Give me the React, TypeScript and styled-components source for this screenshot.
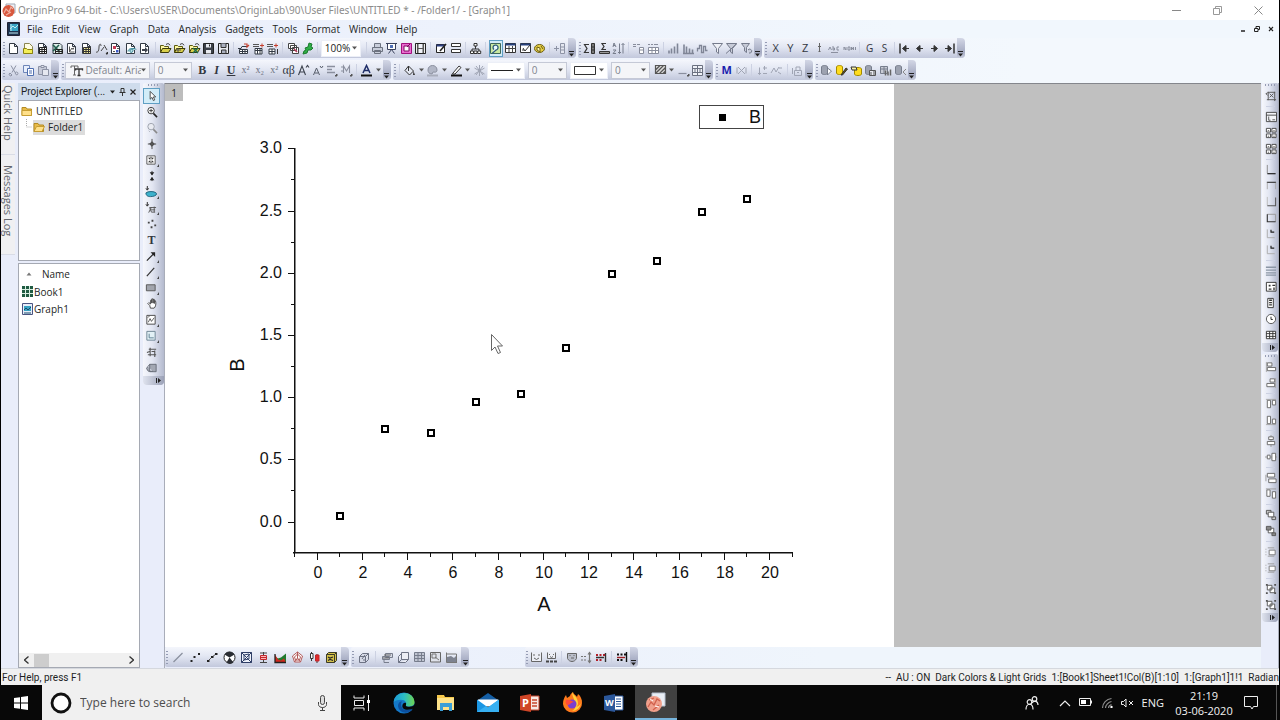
import React from 'react';
import styled, { createGlobalStyle, css } from 'styled-components';

/* ---------- icon drawings, on a 13 x 13 grid: [path, stroke, fill, stroke width] ---------- */

type Stroke = [string, string?, string?, number?];

const INK = '#333a45';
const DIM = '#8d93a5';
const NONE = 'none';
const sheet: Stroke = ['M2.5 1.5h5l3 3v7h-8z M7.5 1.5v3h3', INK, '#fff'];
const disk: Stroke[] = [['M1.5 1.5h10v10h-10z', '#222', '#3b4048'], ['M4 2h5v3.5h-5z M4 8h5v3.5h-5z', NONE, '#e8eaf0'], ['M7.5 2.5v2', '#222']];
const openFolder: Stroke[] = [['M1.5 10.5v-7h3l1 1h4v2', '#5c5a10', '#fdf7a0'], ['M1.5 10.5l2-4h8.500l-2.500 4z', '#3a390b', '#d8cf4a'], ['M7 2.500c2-1.500 3-1 4 .8', '#333']];
const cube: Stroke[] = [['M1.500 5.500h6v6h-6z M1.500 5.500l3-3h6l-3 3 M10.500 2.500v6l-3 3', '#6d7384', '#d5d9e6'], ['M4 8l3-4 M5 9h3', '#6d7384']];

const ICONS: Record<string, Stroke[]> = {
  newDoc: [sheet],
  newFolder: [['M2.500 1.500h5l3 3v7h-8z', '#8a8450', '#fffde0'], ['M1.500 6.500h3l1 1h5v4h-9z', '#8a8210', '#f3ee58']],
  newBook: [sheet, ['M3.500 5.500h7v6h-7z', '#222', '#fff'], ['M3.500 7.500h7 M3.500 9.500h7 M6 5.500v6 M8.500 5.500v6', '#222']],
  newExcel: [['M2 1.500h7l2 2v8h-9z', INK, '#dfeeea'], ['M2 3l6 6 M8 3l-6 6', '#1e5c4c', NONE, 1.6], ['M4.500 7.500h7v4h-7z M4.500 9.500h7 M8 7.500v4', '#222']],
  newGraph: [sheet, ['M4.500 4.500v5.500h5 M5 9l2-3 1 1.500 1-2', '#555']],
  newMatrix: [sheet, ['M3.500 5.500h7v6h-7z', '#333', '#f6f0a0'], ['M3.500 7.500h7 M3.500 9.500h7 M6 5.500v6 M8.500 5.500v6', '#333']],
  newFunction: [['M1 10c2 1 3-2 3-5s2-4 2-1 M6 9l3-4 M9 3l3 5', '#444'], ['M11 12l1.500-2v2z', '#333', '#333']],
  newLayout: [sheet, ['M4 4h3v3h-3z', NONE, '#c83a56'], ['M7 8h2.500v2.500h-2.500z', NONE, '#3a58c8'], ['M4 9.500h2 M8 6.500h2', '#555']],
  newNotes: [sheet, ['M4 9.500c0-3 5-4 5-1s-4 2-3 0 5-3 6-1', '#2e7d90', '#bfe3e8']],
  digitize: [sheet, ['M4 7h3v-2l3 3-3 3v-2h-3z', NONE, '#3c414c']],
  open: openFolder,
  openTemplate: [...openFolder, ['M3 8h5 M5 6v4', '#555']],
  openExcel: [...openFolder, ['M5 6l5 5 M10 6l-5 5', '#1e6b4c', NONE, 1.4]],
  save: disk,
  saveTemplate: [['M1.500 1.500h10v10h-10z', '#222', '#e8eaf0'], ['M4 1.500v4h5v-4 M4.500 8h4.500v3.500h-4.500z', '#333', '#aab0c0']],
  importWizard: [['M1 6.500h3l1-2h5 M2.500 7.500h8v4h-8z M2.500 9.500h8 M5.500 7.500v4 M8 7.500v4', INK, '#fff'], ['M7 2h3v3l2-2', '#c5402e', NONE, 1.2]],
  importSingle: [['M3 12v-5.500h7v5.500z M3 8.500h7 M5.500 7v5 M8 7v5', INK, '#fff'], ['M1 2.500h6 M1 4.500h6', '#555'], ['M8 3.500h4 M10 1.500v4', '#c5402e']],
  importMulti: [['M1 2.500h6 M1 4.500h6', '#555'], ['M3 12v-5h6v5z M3 9.500h6 M6 7v5', INK, '#fff'], ['M8 3.500h4 M10 1.500v4', '#c5402e'], ['M11.500 7v5', '#333']],
  batch: [['M1.500 1.500h6v5h-6z M3.500 3.500h6v5h-6z M5.500 5.500h6v6h-6z', '#444', '#fff'], ['M7 7l3 3', '#b43a5a', NONE, 1.6]],
  recalc: [['M8 1l3 1-1 3 2 1-2 2-3 0-1 3-4 1 1-3 2-1-1-2 3-1z', '#1a7a2c', '#2fae46']],
  print: [['M3.500 5v-3.500h6v3.500 M1.500 5.500h10v4h-10z M3.500 8.500h6v3h-6z', '#6c7280', '#c9cedb']],
  slideShow: [['M1 1.500h11 M2.500 1.500v6h8v-6 M6.500 7.500l-3 4 M6.500 7.500l3 4', '#39415c', '#fff'], ['M5 3h3v3h-3z', NONE, '#4f6fb5']],
  graphWindow: [['M1.500 1.500h10v10h-10z', '#a0107c', '#e96bd0'], ['M4 4h5v5h-5z', '#7c0a60', '#fff'], ['M10 2l-3 3', '#7c0a60']],
  film: [['M1.500 1.500h10v10h-10z', '#222', '#555'], ['M4.500 2h4v4h-4z M4.500 7h4v4h-4z', NONE, '#f0f2f8'], ['M2.500 2v9 M10.500 2v9', '#eee', NONE, 1]],
  editLayout: [['M1.500 2.500h8v8h-8z', '#222', '#fff'], ['M1.500 3.500h8', '#2c3f80', NONE, 2], ['M5 9l6-7', '#222', NONE, 1.6]],
  rows: [['M2.500 1.500h9v3h-9z M2.500 7.500h9v3h-9z', '#333', '#fff']],
  tree: [['M6.500 4v3 M3 9v-2h7v2', '#333'], ['M5 1.500h3v2.500h-3z M1.500 9h3v2.500h-3z M5 9h3v2.500h-3z M8.700 9h3v2.500h-3z', '#333', '#fff']],
  find: [['M1.500 1.500h10v10h-10z', '#41685a', '#c9e8a0'], ['M5 7.500a2.500 2.500 0 1 1 2 .5l-4 3.500', '#2c5a78', '#eafcff', 1.300]],
  resultsLog: [['M1.500 1.500h10v9h-10z', '#333', '#fff'], ['M1.500 2.500h10', '#27407c', NONE, 2], ['M1.500 6.500h10 M5 4v6 M8.500 4v6', '#444']],
  script: [['M1.500 1.500h10v9h-10z', '#333', '#fff'], ['M1.500 2.500h10', '#27407c', NONE, 2], ['M4 6l2 3 5-6 M3 8h2', '#333']],
  codeBuilder: [['M1.500 6.500a5 4 0 1 0 10 0a5 4 0 1 0-10 0z', '#6b5c10', '#e6cf45'], ['M4 5v3l3 2v-4z M8 4l2 3', '#6b5c10', '#fff8b0']],
  addColumn: [['M1 6.500h5 M3.500 4v5', DIM], ['M7.500 1.500h4v10h-4z M7.500 5h4 M7.500 8h4', DIM, '#e4e7f0']],
  colStats: [['M6 2.500h-4.500l2.500 4-2.500 4h4.500', '#333', NONE, 1.200], ['M8.500 1.500h3v10h-3z M8.500 5h3 M8.500 8h3', '#333', '#777']],
  rowStats: [['M8 1.500h-4l2 3-2 3h4', '#333', NONE, 1.200], ['M1.500 9.500h10v2h-10z', '#333', '#999']],
  sort: [['M2 1l-1 4 M2 1l2 4 M1 3.500h2 M1 8h3l-3 3.500h3 M7.500 1.500v10 M6 10l1.500 1.500 1.500-1.500 M11 11.500v-10 M9.500 3l1.500-1.500 1.500 1.500', '#777d8c']],
  setValues: [['M1 2.500h3 M1 4.500h3 M5 2.500h3', '#888d9c'], ['M7.500 5.500h4v6h-4z M7.500 8h4', '#888d9c', '#fff']],
  normalize: [['M1 2.500h2 M4 2.500h2 M7 2.500h4', '#888d9c'], ['M1.500 5.500h10v6h-10z M1.500 8.500h10 M5 5.500v6 M8.500 5.500v6', '#888d9c', '#fff']],
  bars: [['M2 11.500v-3 M4.500 11.500v-5 M7.500 11.500v-7 M10.500 11.500v-10', '#7f8596', NONE, 1.600]],
  barsDown: [['M2 11.500v-9 M4.500 11.500v-7 M7.500 11.500v-5 M10.500 11.500v-4 M1 11.500h11', '#7f8596', NONE, 1.600]],
  wave: [['M1.500 9.500v-3h2v-3h2v7h2v-6h2v4h2', '#7f8596', NONE, 1.300]],
  filter: [['M1.500 1.500h10l-4 5v5l-2-1.500v-3.500z', '#757b8c', '#eef0f6']],
  filterOff: [['M1.500 1.500h10l-4 5v5l-2-1.500v-3.500z M1 11.500l11-10', '#757b8c', '#c7cbd8']],
  filterRedo: [['M1.500 1.500h8l-3 4v5l-2-1.500v-3.500z M8 8a2 2 0 1 1 1 3', '#757b8c', '#c7cbd8']],
  label: [['M6.500 1v8 M5 4.500h3 M5.500 9.500h2', '#666']],
  abc: [['M0.500 8l1.500-3 1.500 3 M5 4v4h1.500v-2h-1.500 M11 5h-2v3h2 M3 10.500h7', '#8a8f9e']],
  none: [['M1 8v-3l2 3v-3 M5 5h2v3h-2z M8.500 8v-3l2 3v-3 M12.500 5v3', '#8a8f9e']],
  first: [['M2 1.500v10', '#333', NONE, 1.500], ['M4.500 6.500l3.500-3v6z M7 6.500h4', '#333', '#333']],
  prev: [['M3.500 6.500l3.500-3v6z M6 6.500h4', '#333', '#333']],
  next: [['M9.500 6.500l-3.500-3v6z M7 6.500h-4', '#333', '#333']],
  last: [['M11 1.500v10', '#333', NONE, 1.500], ['M8.500 6.500l-3.500-3v6z M6 6.500h-4', '#333', '#333']],
  cut: [['M4 1.500l4 7 M9 1.500l-4 7 M3 9a1.500 1.500 0 1 0 2 2z M8 9a1.500 1.500 0 1 1 1.500 2z', DIM]],
  copy: [['M1.500 1.500h6v7h-6z', '#6e86b8', '#e8effc'], ['M5.500 4.500h6v7h-6z M7 7h3 M7 9h3', '#4f6fb0', '#fff']],
  paste: [['M1.500 2.500h8v8h-8z', DIM, '#c6cad8'], ['M4 1.500h3v2h-3z M5.500 5.500h6v6h-6z', DIM, '#e6e8f0']],
  bigger: [['M1.500 11l3.500-9 3.500 9 M3 8h4 M9 3.500l1.500-2 1.500 2', '#3c424e', NONE, 1.100]],
  smaller: [['M2.500 11l3-7 3 7 M4 9h3 M9 2l1.500 2 1.500-2', '#555b68']],
  align: [['M2 2.500h8 M2 5.500h5 M2 8.500h8', '#8a8f9e', NONE, 1.300], ['M10 12l2-2v2z', '#555', '#555']],
  anchor: [['M3.500 9v-7l3 5 3-5v7 M1 3h2 M1 7h2', '#8a8f9e', NONE, 1.100], ['M10 12l2-2v2z', '#555', '#555']],
  bucket: [['M5.500 2l5 5-4 4-4.500-4.500z', '#333', '#e4e8f2'], ['M5.500 2v5', '#333'], ['M10.500 7l1.500 4h-2z', NONE, '#333']],
  palette: [['M2 6c0-6 9-6 9 0 0 3-3 2-4 2l-1 2c-3 0-4-2-4-4z', '#8a8f9e', '#b2b7c6'], ['M1 11.500h11', '#a8adba', NONE, 2]],
  pen: [['M3 9l6-7 2 1.500-6 6.500-2.500 0z', '#333', '#fff'], ['M1 11.500h11', '#111', NONE, 2]],
  burst: [['M6.500 1v11 M1.500 4l10 6 M11.500 4l-10 6 M3 2l7 9 M10 2l-7 9', '#a0a5b4'], ['M5 5h3v3h-3z', NONE, '#a0a5b4']],
  pattern: [['M1.500 1.500h10v8h-10z M1.500 6l4.500-4.500 M1.500 9.500l8-8 M5.500 9.500l6-6 M9 9.500l2.500-2.500', '#555', '#ddd', 1.200]],
  border: [['M1.500 9.500h8', '#8a8f9e', NONE, 1.200], ['M10 12l2-2v2z', '#555', '#555']],
  gridBox: [['M1.500 1.500h10v10h-10z M1.500 4.500h10 M1.500 8.500h10 M6.500 1.500v10 M4 5v3 M9 5v3', '#6b7180', '#f0f2f8']],
  maskOff: [['M2 3.500v6 M11 3.500v6 M3 3l7 7 M10 3l-7 7', '#a0a5b4']],
  swap: [['M3.500 3.500v7 M2 9l1.500 1.500 1.500-1.500 M8.500 2v4 M7 4h4 M7 9.500h4', '#a0a5b4']],
  link: [['M1 9l3-5 2 4 3-5 M9 4h3 M8 8l3 2', '#a0a5b4']],
  lock: [['M3.500 6.500h7v5h-7z M5 6v-3h4v3 M1.500 4v6 M6 8.500h2', '#a0a5b4']],
  db1: [['M1.500 3c0-2 6-2 6 0v6c0 2-6 2-6 0z', '#777d8c', '#9da2b0'], ['M7.500 4l4 3-4 4z', '#777d8c', '#fff']],
  db2: [['M1.500 3c0-2 6-2 6 0v6c0 2-6 2-6 0z', '#a38a00', '#ffdc1e'], ['M6 11l5-7 1.500 1-5 6z', '#333', '#6a5a10']],
  db3: [['M4.500 5c0-2 7-2 7 0v5c0 2-7 2-7 0z', '#a38a00', '#ffdc1e'], ['M1 3h5l1 3h-5z', '#333', '#f7f0a0']],
  db4: [['M1.500 3c0-2 6-2 6 0v6c0 2-6 2-6 0z', '#777d8c', '#9da2b0'], ['M5.500 6.500h6v5h-6z M7 11v-3 M10 11v-4', '#555', '#e8eaf0']],
  db5: [['M1.500 2.500h7v7h-7z M1.500 5h7 M5 2.500v7', '#777d8c', '#c9ccd6'], ['M6.500 11.500v-5 M9 11.500v-4 M11.500 11.500v-6', '#666', NONE, 1.500]],
  db6: [['M1.500 3c0-2 6-2 6 0v6c0 2-6 2-6 0z', '#777d8c', '#9da2b0'], ['M12 5l-3 3 3 3', '#888']],
  pointer: [['M4.500 1.500v8.500l2-2 1.500 3.500 1.500-.8-1.500-3.200h2.500z', '#444', '#fff']],
  zoomIn: [['M9 5a3.500 3.500 0 1 1-7 0a3.500 3.500 0 1 1 7 0z M3.500 5h4 M5.500 3v4', '#333', '#fff'], ['M8 8l4 4', '#222', NONE, 1.700]],
  zoomOut: [['M9 5a3.500 3.500 0 1 1-7 0a3.500 3.500 0 1 1 7 0z M3 9.500l1 1', '#9a9faa', '#e9ebf1'], ['M8 8l4 4', '#888', NONE, 1.700]],
  reader: [['M6.500 1v11 M2 6.500h9', '#444'], ['M6.500 4l2.500 2.500-2.500 2.500-2.500-2.500z', '#444', '#555']],
  dataReader: [['M2 2h9v9h-9z', '#555', '#fff'], ['M4 4l1.500 1.500 M9 4l-1.500 1.500 M4 9l1.500-1.500 M9 9l-1.500-1.500 M6.500 3v2 M6.500 8v2 M6 6.500h1', '#333', NONE, 1.200]],
  selector: [['M6.500 1v4 M6.500 8v4', '#333'], ['M4 2.500h5l-2.500 3.500z M4 11h5l-2.500-3.500z', NONE, '#222']],
  mask: [['M1 7.500c2-2 9-2 11 0s-2 4-6 4-5-2-5-4z', '#1f5f78', '#3cb1cc'], ['M2.500 0v4 M1 2.500l1.500 2 1.500-2', '#222']],
  region: [['M2.500 0v4 M1 2.500l1.500 2 1.500-2', '#222'], ['M5 6h7 M5 6l2 5h4 M6 8.500h5 M4 11.500l3-6 M10 5v6', '#555']],
  drawPoints: [['M2 4h2v2h-2z M6 2h2v2h-2z M5 9h2v2h-2z M9 7h2v2h-2z', NONE, '#444']],
  arrow: [['M2 11.500l7-7', '#222', NONE, 1.300], ['M6 2.500h5v5z', NONE, '#222']],
  line: [['M2 11l8-9', '#333', NONE, 1.300]],
  rect: [['M1.500 3h9.500v6.500h-9.500z', '#555', '#a2a5ad']],
  hand: [['M4 8l-2-2 1-1 2 1.500v-4h1.200v3-4.500h1.500v4.500-4h1.300v4.500-3h1.300c1 3 0 7-1.500 8h-4z', '#444', '#fff']],
  insertGraph: [['M2 1.500h9v9.500h-9z', '#444', '#fff'], ['M3.500 9l2-4 1.500 3 3-4', '#555'], ['M3 4l2-2', '#555']],
  insertEq: [['M2 1.500h9v9.500h-9z', '#6b8392', '#e2f1f6'], ['M4.500 4v4.500h5', '#5b7e90']],
  rescale: [['M3 3.500h8 M2 9.500h9 M4.500 2v9 M9.500 5v7 M6 6h4 M1 7l3-1', '#555', NONE, 1.200]],
  shape3d: [['M4 2.500h7v8h-7z M2 5l2-2.500 M2 5l-1.500 2 2 3h5', '#666b76', '#a3a8b3']],
  rcRescale: [['M3 3l-2 1 2 2 M3 2.500h8 M3.500 2v9 M2 10.500h10 M10.500 2v10 M5 4l4 4 M9 4l-4 4', '#555']],
  legend1: [['M1.500 1.500h11v10h-11z M1.500 4.500h11', '#444', '#f3f5f9'], ['M4 6v4h2 M8 9.500h3', '#555']],
  grid4: [['M1.500 1.500h4.500v4h-4.500z M7.500 1.500h4.500v4h-4.500z M1.500 7.500h4.500v4h-4.500z M7.500 7.500h4.500v4h-4.500z', '#444', '#fff'], ['M3 4h1.500 M9 4h1.500 M3 10h1.500 M9 10h1.500', '#555']],
  axisL: [['M2.500 1v9', '#888'], ['M2.500 10.500h9', '#222', NONE, 1.300]],
  axisT: [['M2 2.500h10', '#333', NONE, 1.200], ['M2.500 3v7 M11.500 3v7', '#aaa']],
  axisR: [['M2.500 1v9', '#bbb'], ['M2.500 10.500h9v-9', '#555', NONE, 1.100]],
  axisB: [['M2.500 2.500h9v8', '#999'], ['M2.500 2.500v8h9', '#333', NONE, 1.200]],
  inset: [['M2.500 1.500v9h8', '#aaa'], ['M6 4.500h4 M6.500 2v3', '#222', NONE, 1.300]],
  hatch: [['M1 2.500h11 M1 5.500h11 M1 8.500h11 M1 11h11', '#8b96a5', NONE, 1.500]],
  legend2: [['M1.500 1.500h10.500v9.500h-10.500z', '#333', '#fff'], ['M4 4h2v2h-2z M8 4h3v1.500h-3z M4 8h3v1.500h-3z M9 7h1.500v3h-1.500z', NONE, '#333']],
  scaleBar: [['M3 1.500h6v10h-6z', '#333', '#fff'], ['M4.500 3.500h3 M4.500 6h3 M4.500 8.500h3', '#333', NONE, 1.400]],
  clock: [['M11.500 6.500a5 5 0 1 1-10 0a5 5 0 1 1 10 0z', '#555', '#fff'], ['M6.500 4v3h2', '#222']],
  table: [['M1.500 2.500h10v8h-10z M1.500 5h10 M1.500 8h10 M5 2.500v8 M8.500 2.500v8', '#333', '#fff']],
  alL: [['M1.500 1v11', '#aaa'], ['M2.500 2h5v3.500h-5z M2.500 7h9v3.500h-9z', '#666', '#fff']],
  alR: [['M11.500 1v11', '#aaa'], ['M5.500 2h5v3.500h-5z M2 7h8.500v3.500h-8.500z', '#666', '#fff']],
  alT: [['M1 1.500h11', '#aaa'], ['M2.500 2.500h3.500v8h-3.500z M8 2.500h3.500v5h-3.500z', '#666', '#fff']],
  alB: [['M1 11.500h11', '#aaa'], ['M2.500 2.500h3.500v8h-3.500z M8 5.500h3.500v5h-3.500z', '#666', '#fff']],
  alH: [['M6.500 0v13', '#999'], ['M4 2h5v3h-5z M2.500 7h8v3.500h-8z', '#666', '#fff']],
  alV: [['M0 6.500h13', '#999'], ['M2.500 4.500h3v4h-3z M7.500 2.500h4v8h-4z', '#666', '#fff']],
  sameW: [['M2.500 1.500h8v4h-8z M4 7.500h8v4h-8z', '#666', '#fff'], ['M1 3v7', '#999']],
  sameH: [['M2 2h3.500v7h-3.500z M8 4h3.500v7h-3.500z', '#666', '#fff'], ['M1 1h11', '#999']],
  front: [['M1.500 1.500h5v4h-5z M7.500 8.500h4v3h-4z', '#555', '#ccc'], ['M3.500 3.500h6v5h-6z', '#555', '#fff']],
  back: [['M3.500 3.500h6v5h-6z', '#555', '#fff'], ['M1.500 1.500h5v4h-5z M7.500 8.500h4v3h-4z', '#555', '#888']],
  fontUp: [['M4.500 4.500h6.500v5h-6.500z', '#777', '#fff'], ['M1 3v1 M1 6v1 M1 9v1 M3 2h7 M3 11h7', '#999']],
  group: [['M2.500 2.500h5v5h-5z M5.500 5.500h5v5h-5z', '#555', '#fff'], ['M1 1h2v2h-2z M10 1h2v2h-2z M1 10h2v2h-2z M10 10h2v2h-2z', NONE, '#555']],
  plotLine: [['M1.500 11l9-9', '#8a8f9e', NONE, 1.200]],
  plotScatter: [['M1.500 9h2v2h-2z M4.500 5h2v2h-2z M9 2h2v2h-2z', NONE, '#222']],
  plotLineSym: [['M2 10l4-4 4-3', '#555'], ['M1 9h2.500v2h-2.500z M5 5h2.500v2h-2.500z M9 2h2.500v2h-2.500z', NONE, '#222']],
  plotPie: [['M12 6.500a5.500 5.500 0 1 1-11 0a5.500 5.500 0 1 1 11 0z', '#222', '#fff'], ['M6.500 6.500l-5-3a6 6 0 0 1 10 0z M6.500 6.500l-3 5a5 5 0 0 0 7 0z', NONE, '#2a2d33']],
  plot3d: [['M1.500 1.500h10v10h-10z M1.500 1.500l10 10 M11.500 1.500l-10 10 M4 4l5-1 0 5-5 1z', '#2f3e66', '#eef2fb']],
  plotBox: [['M6.500 1v11 M3 2h7 M3 11.500h7', '#444'], ['M3.500 4.500h6v4h-6z M3.500 6.500h6', '#c1272d', '#ffb7b7']],
  plotArea: [['M1 11.500v-6l3 2 3-1 5-4v9z', NONE, '#207a2e'], ['M1 11.500v-8l3 5 3 1 3-2 2 4z', NONE, '#d3281f'], ['M1 3v8.500h11', '#222', NONE, 1.300]],
  plotPolar: [['M6.500 1l5 4-2 6h-6l-2-6z M6.500 3l3 3-1 3h-4l-1-3z M6.500 1v6 M3.500 11l3-4 3 4', '#b35a5a', '#fff']],
  plotStock: [['M3.500 1v9 M9 3v9', '#333'], ['M2.500 2.500h2.500v5h-2.500z', '#333', '#fff'], ['M7.500 4h3.500v6h-3.500z', '#c1272d', '#e22b2b']],
  plotTemplate: [['M1.500 3.500l2-2h8v8l-2 2h-8z M1.500 3.500h8v8 M9.500 3.500l2-2', '#3b3b28', '#d3c04a'], ['M3 6l2 1 3-1 M3 9.500l2-1 3 1', '#222', '#f5ec9b', 1.200]],
  cubeA: cube,
  cubeB: [['M1.500 5.500h7v3h-7z M4.500 2.500h7v4h-7z M3 8.500v3h5', '#777d8c', '#d5d9e6'], ['M3 4l7 0 M2 7h6', '#666']],
  cubeC: [['M4.500 1.500h7v7h-7z M1.500 11.500l3-3 M1.500 11.500h7l3-3 M1.500 11.500v-6l3-3', '#6d7384', '#eceef5']],
  mesh: [['M1.500 1.500h10v9h-10z M1.500 4.500h10 M1.500 7.500h10 M5 1.500v9 M8.500 1.500v9', '#777d8c', '#c0c5d2']],
  contour: [['M1.500 1.500h10v9.500h-10z', '#666', '#dfe2ea'], ['M3 3h4v4h-4z M6 6l4 3', '#777']],
  heat: [['M1.500 1.500v10h10.500 M1.500 3h10 M11.500 3v8', '#777'], ['M2 6l4-1 3 2 2-2v6h-9z', NONE, '#7d8290']],
  face: [['M1.500 1.500v9h10v-9 M4 3v2 M9 3v2 M4 7l2.500 1.500 2.500-1.500', '#666', '#eceef5']],
  faces: [['M2.500 1.500v6h8v-6 M4.500 3v1 M8.500 3v1 M5 5.500l1.500 1 1.500-1', '#666', '#eceef5'], ['M1 10.500h3 M5 10.500h3 M9 10.500h3', '#444', NONE, 2]],
  mask3: [['M1.500 2.500h9v5c-2 4-7 4-9 0z M4 4v1 M8 4v1 M5 7h3', '#666', '#b9bdc9']],
  dotsUp: [['M1 5.500h2 M4 5.500h2 M1 9h2 M4 9h2 M9.500 2v9 M8 3.500l1.500-2 1.500 2 M8 9.500l1.500 2 1.500-2', '#777', NONE, 1.200]],
  dotsRed: [['M1 4h2 M4.500 4h2 M8 4h2 M1 9h2 M4.500 9h2', '#b3202a', NONE, 2], ['M1 6.500h8 M10.500 2v9', '#333', NONE, 1.400]],
  dotsBlack: [['M1 3.500h2 M4.500 3.500h2 M8 3.500h2 M1 9h2 M4.500 9h2', '#111', NONE, 2], ['M1 6.500h8', '#a02025', NONE, 1.400], ['M10.500 1v10', '#111', NONE, 1.400]],
};

/* ---------- shared parts ---------- */

const Global = createGlobalStyle`
  * { box-sizing: border-box; }
  body { margin: 0; background: #e9edfa; font-family: 'Open Sans', 'Noto Sans', sans-serif; font-size: 10px; color: #1d1f24; }
  button { font: inherit; color: inherit; border: 0; padding: 0; background: none; }
  ul { list-style: none; margin: 0; padding: 0; }
`;

const Window = styled.div`
  display: flex;
  flex-direction: column;
  min-height: 100vh;
`;

const AppFrame = styled.main`
  flex: 1;
  display: flex;
  flex-direction: column;
  border: solid #000;
  border-width: 0 1px;
`;

const TitleBar = styled.header`
  display: flex;
  align-items: center;
  height: 20px;
  padding: 0 16px 0 1px;
  gap: 2px;
  background: #fff;
  color: #8c8c8c;
`;

const Title = styled.h1`
  flex: 1;
  margin: 0;
  font-family: 'Noto Sans', 'Open Sans', sans-serif;
  font-size: 10px;
  font-weight: 400;
  line-height: 20px;
`;

const WindowButtons = styled.div<{ $gap: number }>`
  display: flex;
  gap: ${(p) => p.$gap}px;
  button { display: flex; }
`;

const MenuBar = styled.nav`
  display: flex;
  align-items: center;
  height: 18px;
  padding: 0 5px 0 6px;
  background: linear-gradient(90deg, #e9edfb, #f1f7fd 70%);
`;

const Menus = styled.div`
  flex: 1;
  display: flex;
  gap: 1px;
  margin-left: 3px;
`;

const MenuButton = styled.button`
  padding: 0 4px;
  line-height: 18px;
`;

const DockRows = styled.div`
  display: flex;
  flex-direction: column;
  gap: 2px;
  padding: 0 0 3px 1px;
  background: linear-gradient(90deg, #e9edfb, #f3f8fd 80%);
`;

const DockRow = styled.div`
  display: flex;
  gap: 2px;
  height: 20px;
`;

const Toolbar = styled.div<{ $width: number }>`
  flex: none;
  display: flex;
  align-items: center;
  justify-content: space-between;
  width: ${(p) => p.$width}px;
  border-radius: 2px 4px 4px 2px;
  background: linear-gradient(#f4f6fc, #e3e7f3 45%, #c2c8dc);
`;

const Grip = styled.span<{ $vertical?: boolean }>`
  flex: none;
  width: ${(p) => (p.$vertical ? 11 : 2)}px;
  height: ${(p) => (p.$vertical ? 2 : 13)}px;
  margin: ${(p) => (p.$vertical ? '1px auto 2px' : '0 1px')};
  background: repeating-linear-gradient(${(p) => (p.$vertical ? '90deg' : '180deg')}, #959cb4 0 1px, transparent 1px 3px);
`;

const Separator = styled.span<{ $vertical?: boolean }>`
  flex: none;
  width: ${(p) => (p.$vertical ? 9 : 5)}px;
  height: ${(p) => (p.$vertical ? 5 : 12)}px;
  margin: ${(p) => (p.$vertical ? '0 auto' : '0')};
  background: linear-gradient(#ccd1e2, #ccd1e2) center / ${(p) => (p.$vertical ? '100% 1px' : '1px 100%')} no-repeat;
`;

const Cap = styled.button`
  align-self: stretch;
  display: flex;
  align-items: flex-end;
  justify-content: center;
  width: 8px;
  padding-bottom: 1px;
  border-radius: 0 4px 4px 0;
  background: linear-gradient(#d3d7e6, #a5abc2 70%, #c8cddd);
`;

const ToolButton = styled.button<{ $active?: boolean; $w?: number; $serif?: boolean; $bold?: boolean; $size?: number; $color?: string; $h?: number }>`
  flex: none;
  display: flex;
  align-items: center;
  justify-content: center;
  width: ${(p) => p.$w ?? 14}px;
  height: ${(p) => p.$h ?? 17}px;
  font-family: ${(p) => (p.$serif ? "'Liberation Serif', serif" : "'Open Sans', sans-serif")};
  font-weight: ${(p) => (p.$bold ? 700 : 400)};
  font-size: ${(p) => p.$size ?? 12}px;
  line-height: 16px;
  color: ${(p) => p.$color ?? '#33373f'};
  ${(p) => p.$active && css`background: #d2ecf8; outline: 1px solid #5f9fc4; outline-offset: -1px;`}
  svg { flex: none; }
  i { font-style: italic; }
  u { text-decoration: underline; }
`;

const SelectBox = styled.label<{ $w: number; $white?: boolean }>`
  flex: none;
  display: flex;
  align-items: center;
  width: ${(p) => p.$w}px;
  height: 17px;
  margin-right: 3px;
  padding: 0 3px;
  border: 1px solid ${(p) => (p.$white ? '#eceff7' : '#c5c9d6')};
  background: ${(p) => (p.$white ? '#fff' : '#f4f5f8')};
  select {
    flex: 1;
    min-width: 0;
    appearance: none;
    border: 0;
    padding: 0;
    background: transparent;
    font: inherit;
    color: ${(p) => (p.$white ? '#222' : '#80848e')};
  }
`;

const Svg = ({ name, size = 13 }: { name: string; size?: number }) => (
  <svg width={size} height={size} viewBox="0 0 13 13" aria-hidden="true">
    {ICONS[name].map(([d, stroke = INK, fill = NONE, w = 1], i) => (
      <path key={i} d={d} stroke={stroke} fill={fill} strokeWidth={w} />
    ))}
  </svg>
);

const Arrow = ({ color = '#555' }: { color?: string }) => (
  <svg width="5" height="4" viewBox="0 0 5 4" aria-hidden="true"><path d="M0 .5h5l-2.500 3z" fill={color} /></svg>
);

const OverflowCap = () => (
  <Cap aria-label="Toolbar options">
    <svg width="5" height="6" viewBox="0 0 5 6" aria-hidden="true"><path d="M0 .5h5" stroke="#222" /><path d="M0 2.500h5l-2.500 3z" fill="#222" /></svg>
  </Cap>
);

/* '|' is a separator, any other word names an icon */
const Tools = ({ list, active }: { list: string; active?: string }) => (
  <>
    {list.split(' ').map((n, i) =>
      n === '|' ? <Separator key={i} /> : (
        <ToolButton key={i} $active={n === active} aria-label={n}><Svg name={n} /></ToolButton>
      ),
    )}
  </>
);

const DropArrow = () => <ToolButton $w={9} aria-label="More"><Arrow /></ToolButton>;

/* ---------- toolbars ---------- */

const TopToolbars = () => (
  <DockRows>
    <DockRow>
      <Toolbar $width={574}>
        <Grip />
        <Tools list="newDoc newFolder newBook newExcel newGraph newMatrix newFunction newLayout newNotes digitize | open openTemplate openExcel save saveTemplate | importWizard importSingle importMulti | batch recalc |" />
        <SelectBox $w={40} $white>
          <select aria-label="Zoom"><option>100%</option></select>
          <Arrow />
        </SelectBox>
        <Separator />
        <Tools list="print slideShow graphWindow film | editLayout rows | tree | find resultsLog script codeBuilder | addColumn" active="find" />
        <OverflowCap />
      </Toolbar>
      <Toolbar $width={184}>
        <Grip />
        <Tools list="colStats rowStats sort | setValues normalize | bars barsDown wave filter filterOff filterRedo" />
        <OverflowCap />
      </Toolbar>
      <Toolbar $width={201}>
        <Grip />
        {['X', 'Y', 'Z'].map((c) => <ToolButton key={c} $size={11}>{c}</ToolButton>)}
        <Tools list="label abc none |" />
        {['G', 'S'].map((c) => <ToolButton key={c} $size={10}>{c}</ToolButton>)}
        <Tools list="| first prev next last" />
        <OverflowCap />
      </Toolbar>
    </DockRow>
    <DockRow>
      <Toolbar $width={57}>
        <Grip />
        <Tools list="cut copy paste" />
        <OverflowCap />
      </Toolbar>
      <Toolbar $width={330}>
        <Grip />
        <SelectBox $w={85}>
          <svg width="16" height="13" viewBox="0 0 16 13" aria-hidden="true"><path d="M2 4v-2h7v2 M5.500 2v9 M4 11h3" stroke="#666" fill="none" /><path d="M6.500 6.500v-1.500h7v1.500 M10 5v6.500 M8.500 11.500h3" stroke="#333" fill="none" strokeWidth="1.300" /></svg>
          <select aria-label="Font"><option>Default: Arial</option></select>
          <Arrow />
        </SelectBox>
        <SelectBox $w={38}>
          <select aria-label="Font size"><option>0</option></select>
          <Arrow />
        </SelectBox>
        <ToolButton $serif $bold>B</ToolButton>
        <ToolButton $serif $bold><i>I</i></ToolButton>
        <ToolButton $serif $bold><u>U</u></ToolButton>
        <ToolButton $serif $size={10} $color="#6b7180">x²</ToolButton>
        <ToolButton $serif $size={10} $color="#6b7180">x₂</ToolButton>
        <ToolButton $serif $size={10} $color="#6b7180">x²</ToolButton>
        <ToolButton $serif>αβ</ToolButton>
        <Tools list="bigger smaller align anchor |" />
        <ToolButton aria-label="Font color">
          <svg width="13" height="13" viewBox="0 0 13 13" aria-hidden="true"><path d="M3 9l3.500-7.500 3.500 7.500 M4.500 6.500h4" stroke="#1d2c66" fill="none" strokeWidth="1.500" /><path d="M1 11.500h11" stroke="#111" strokeWidth="2" /></svg>
        </ToolButton>
        <DropArrow />
        <OverflowCap />
      </Toolbar>
      <Toolbar $width={320}>
        <Grip />
        <Separator />
        <Tools list="bucket" /><DropArrow />
        <Tools list="palette" /><DropArrow />
        <Tools list="pen" /><DropArrow />
        <Tools list="burst" />
        <SelectBox $w={38} $white>
          <svg width="24" height="9" viewBox="0 0 24 9" aria-hidden="true"><path d="M0 4.500h22" stroke="#222" /></svg>
          <select aria-label="Line style" /><Arrow />
        </SelectBox>
        <SelectBox $w={39}><select aria-label="Line width"><option>0</option></select><Arrow /></SelectBox>
        <SelectBox $w={38} $white>
          <svg width="24" height="9" viewBox="0 0 24 9" aria-hidden="true"><path d="M.5 .5h21v8h-21z" stroke="#333" fill="#fff" /></svg>
          <select aria-label="Fill pattern" /><Arrow />
        </SelectBox>
        <SelectBox $w={39}><select aria-label="Pattern width"><option>0</option></select><Arrow /></SelectBox>
        <Tools list="pattern" /><DropArrow />
        <Tools list="border gridBox" />
        <OverflowCap />
      </Toolbar>
      <Toolbar $width={98}>
        <Grip />
        <ToolButton $bold $size={11} $color="#1a1fae">M</ToolButton>
        <Tools list="maskOff | swap link | lock" />
        <OverflowCap />
      </Toolbar>
      <Toolbar $width={101}>
        <Grip />
        <Tools list="db1 db2 db3 db4 db5 db6" />
        <OverflowCap />
      </Toolbar>
    </DockRow>
  </DockRows>
);

const BottomDock = styled.div`
  display: flex;
  gap: 2px;
  height: 21px;
  padding-bottom: 1px;
  background: linear-gradient(90deg, #e9edfb, #eff5fc 60%);
`;

const DockSpace = styled.span`
  width: 52px;
`;

const BottomToolbars = () => (
  <BottomDock>
    <Toolbar $width={184}>
      <Grip />
      <Tools list="plotLine plotScatter plotLineSym plotPie plot3d plotBox plotArea plotPolar plotStock plotTemplate" />
      <OverflowCap />
    </Toolbar>
    <Toolbar $width={118}>
      <Grip />
      <Tools list="cubeA | cubeB cubeC mesh contour heat" />
      <OverflowCap />
    </Toolbar>
    <DockSpace />
    <Toolbar $width={113}>
      <Grip />
      <Tools list="face faces | mask3 dotsUp dotsRed | dotsBlack" />
      <OverflowCap />
    </Toolbar>
  </BottomDock>
);

/* ---------- workspace ---------- */

const Body = styled.div`
  flex: 1;
  display: flex;
  border-bottom: 1px solid #d5d8de;
`;

const AutoHide = styled.div`
  display: flex;
  flex-direction: column;
  align-items: flex-start;
  width: 17px;
`;

const SideTab = styled.button<{ $h: number; $pad: number }>`
  width: 14px;
  height: ${(p) => p.$h}px;
  padding-top: ${(p) => p.$pad}px;
  border-bottom: 1px solid #d9dce6;
  background: #f0f0f2;
  color: #63666e;
  writing-mode: vertical-rl;
  text-align: left;
  font-size: 11px;
  line-height: 14px;
`;

const Explorer = styled.aside`
  display: flex;
  flex-direction: column;
  width: 122px;
`;

const ExplorerHead = styled.div`
  display: flex;
  align-items: center;
  gap: 4px;
  height: 17px;
  padding: 0 4px 0 3px;
  background: #cfdcec;
  h2 { flex: 1; min-width: 0; margin: 0; font-family: Roboto, 'Open Sans', sans-serif; font-size: 10px; font-weight: 400; white-space: nowrap; }
  button { display: flex; }
`;

const Pane = styled.section<{ $grow?: boolean }>`
  display: flex;
  flex-direction: column;
  ${(p) => (p.$grow ? 'flex: 1;' : 'height: 161px;')}
  margin-bottom: ${(p) => (p.$grow ? 0 : 2)}px;
  border: 1px solid #a5a9b3;
  background: #fff;
`;

const Tree = styled.ul`
  padding-top: 2px;
`;

const TreeRow = styled.li<{ $child?: boolean }>`
  display: flex;
  align-items: center;
  height: 16px;
  margin-left: ${(p) => (p.$child ? 7 : 2)}px;
`;

const TreeItem = styled.span<{ $selected?: boolean }>`
  display: flex;
  align-items: center;
  gap: 3px;
  padding-right: 2px;
  line-height: 15px;
  background: ${(p) => (p.$selected ? '#dcdcdc' : 'none')};
`;

const Files = styled.ul`
  flex: 1;
  li { display: flex; align-items: center; gap: 1px; height: 17px; padding-left: 3px; }
`;

const ListHead = styled.button`
  display: flex;
  align-items: center;
  gap: 10px;
  height: 19px;
  padding-left: 7px;
`;

const ScrollTrack = styled.div`
  display: flex;
  align-items: center;
  justify-content: space-between;
  height: 14px;
  padding: 0 5px;
  background: #f0f0f0;
`;

const Thumb = styled.span`
  width: 15px;
  height: 13px;
  margin: 0 auto 0 5px;
  background: #cdcdcd;
`;

const FolderIcon = ({ open }: { open?: boolean }) => (
  <svg width="12" height="11" viewBox="0 0 12 11" aria-hidden="true">
    <path d="M1 9.500v-8h4l1 1.500h4.500v6.500z" fill="#e8bb48" stroke="#b38a22" />
    <path d={open ? 'M1 9.500l2.500-5h8l-2.500 5z' : 'M1 9.500v-5h9.500v5z'} fill="#ffe08a" stroke="#c79e33" />
  </svg>
);

const ExplorerPanel = () => (
  <Explorer>
    <ExplorerHead>
      <h2>Project Explorer (...</h2>
      <button aria-label="Panel menu"><Arrow color="#222" /></button>
      <button aria-label="Auto hide"><svg width="7" height="8" viewBox="0 0 7 8" aria-hidden="true"><path d="M2 .5h3v4h-3z M.5 4.500h6 M3.500 5v3" stroke="#333" fill="none" /></svg></button>
      <button aria-label="Close panel"><svg width="6" height="6" viewBox="0 0 6 6" aria-hidden="true"><path d="M.5 .5l5 5 M5.500 .5l-5 5" stroke="#222" strokeWidth="1.200" /></svg></button>
    </ExplorerHead>
    <Pane>
      <Tree>
        <TreeRow><TreeItem><FolderIcon />UNTITLED</TreeItem></TreeRow>
        <TreeRow $child>
          <svg width="7" height="16" viewBox="0 0 7 16" aria-hidden="true"><path d="M.5 0v8h6" stroke="#aaa" fill="none" strokeDasharray="1 1" /></svg>
          <TreeItem $selected><FolderIcon open />Folder1</TreeItem>
        </TreeRow>
      </Tree>
    </Pane>
    <Pane $grow>
      <ListHead><svg width="6" height="4" viewBox="0 0 6 4" aria-hidden="true"><path d="M.5 3.500l2.500-3 2.500 3z" fill="#777" /></svg>Name</ListHead>
      <Files>
        <li>
          <svg width="11" height="11" viewBox="0 0 11 11" aria-hidden="true"><path d="M0 0h11v11h-11z" fill="#1f5b42" /><path d="M0 3.500h11 M0 7.500h11 M3.500 0v11 M7.500 0v11" stroke="#d9efe2" /></svg>
          Book1
        </li>
        <li>
          <svg width="11" height="12" viewBox="0 0 11 12" aria-hidden="true"><path d="M.5 .5h10v11h-10z" fill="#e8eefa" stroke="#4b5480" /><path d="M2 3h7v5h-7z" fill="#36a3c4" /><path d="M2 7l2-2 2 2 3-3 M2 10h7" stroke="#174d6d" fill="none" /></svg>
          Graph1
        </li>
      </Files>
      <ScrollTrack>
        <svg width="5" height="8" viewBox="0 0 5 8" aria-hidden="true"><path d="M4.500 .5l-4 3.500 4 3.500" stroke="#333" fill="none" strokeWidth="1.300" /></svg>
        <Thumb />
        <svg width="5" height="8" viewBox="0 0 5 8" aria-hidden="true"><path d="M.5 .5l4 3.500-4 3.500" stroke="#333" fill="none" strokeWidth="1.300" /></svg>
      </ScrollTrack>
    </Pane>
  </Explorer>
);

const ToolColumn = styled.div<{ $w: number; $pad: number }>`
  flex: none;
  display: flex;
  flex-direction: column;
  gap: 2px;
  width: ${(p) => p.$w}px;
  padding-left: ${(p) => p.$pad}px;
  border-right: 1px solid #a9adb9;
`;

const VerticalBar = styled.div`
  display: flex;
  flex-direction: column;
  border-radius: 2px 2px 4px 4px;
  background: linear-gradient(90deg, #f6f7fc, #e2e6f2 45%, #b4bace);
`;

const VerticalCap = styled.button`
  display: flex;
  align-items: center;
  justify-content: flex-end;
  height: 9px;
  padding-right: 3px;
  border-radius: 0 0 4px 4px;
  background: linear-gradient(90deg, #dfe3ee, #9ba1b7);
`;

const Corner = styled.span`
  align-self: flex-end;
  display: flex;
  padding-bottom: 1px;
`;

const SideTools = ({ list, active, corners = '' }: { list: string; active?: string; corners?: string }) => (
  <VerticalBar>
    <Grip $vertical />
    {list.split(' ').map((n, i) =>
      n === '|' ? <Separator key={i} $vertical /> : n === 'T' ? <ToolButton key={i} $w={17} $h={16} $serif $bold aria-label="Text">T</ToolButton> : (
        <ToolButton key={i} $w={17} $h={16} $active={n === active} aria-label={n}>
          <Svg name={n} size={12} />
          {corners.includes(n) && <Corner><svg width="2" height="3" viewBox="0 0 2 3" aria-hidden="true"><path d="M2 0v3h-2z" fill="#444" /></svg></Corner>}
        </ToolButton>
      ),
    )}
    <VerticalCap aria-label="Toolbar options"><svg width="5" height="5" viewBox="0 0 5 5" aria-hidden="true"><path d="M.5 0v5" stroke="#222" /><path d="M2 0l3 2.500-3 2.500z" fill="#222" /></svg></VerticalCap>
  </VerticalBar>
);

const Center = styled.div`
  flex: 1;
  min-width: 0;
  display: flex;
  flex-direction: column;
`;

const Canvas = styled.div`
  flex: 1;
  display: flex;
  border-top: 1px solid #84868c;
  background: #c0c0c0;
`;

const Page = styled.section`
  flex: 0 1 729px;
  display: flex;
  align-items: flex-start;
  background: #fff;
`;

const LayerButton = styled.button`
  flex: none;
  width: 18px;
  height: 17px;
  margin-right: -18px;
  background: #bdbdbd;
`;

const Plot = styled.svg`
  flex: 1;
  min-width: 0;
  height: 562px;
  font-family: 'Liberation Sans', Arial, sans-serif;
  font-size: 16px;
`;

const DATA: [number, number][] = [[1, 0.05], [3, 0.75], [5, 0.72], [7, 0.97], [9, 1.03], [11, 1.4], [13, 2], [15, 2.1], [17, 2.5], [19, 2.6]];
const px = (v: number) => Math.round(152.5 + 22.63 * v);
const py = (v: number) => Math.round(437.5 - 124.4 * v);

const Graph = () => (
  <Plot viewBox="0 0 729 562" preserveAspectRatio="xMinYMin meet" role="img" aria-label="Scatter plot of B against A">
    <g fill="#111">
      <rect x={px(-1) - 1} y={py(3)} width="1.500" height={py(-0.25) - py(3)} />
      <rect x={px(-1) - 2} y={py(-0.25) - 1} width={px(21) - px(-1) + 2} height="1.500" />
      {Array.from({ length: 13 }, (_, i) => i * 0.25).map((v) => {
        const len = v % 0.5 === 0 ? 7 : 4;
        return <rect key={v} x={px(-1) - len} y={py(v)} width={len} height="1" />;
      })}
      {Array.from({ length: 23 }, (_, i) => i - 1).map((v) => (
        <rect key={v} x={px(v) - 1} y={py(-0.25)} width="1" height={v % 2 === 0 ? 7 : 4} />
      ))}
    </g>
    <g fill="#111" textAnchor="end">
      {[0, 0.5, 1, 1.5, 2, 2.5, 3].map((v) => <text key={v} x="117" y={py(v) + 5}>{v.toFixed(1)}</text>)}
    </g>
    <g fill="#111" textAnchor="middle">
      {Array.from({ length: 11 }, (_, i) => i * 2).map((v) => <text key={v} x={px(v)} y="494">{v}</text>)}
      <text x="379" y="527" fontSize="20">A</text>
      <text transform="translate(79 281) rotate(-90)" fontSize="20">B</text>
    </g>
    {DATA.map(([x, y]) => (
      <g key={x}>
        <rect x={px(x) - 4} y={py(y) - 3} width="8" height="8" fill="#000" />
        <rect x={px(x) - 2} y={py(y) - 1} width="4" height="4" fill="#fff" />
      </g>
    ))}
    <rect x="534.5" y="21.500" width="64" height="23" fill="#fff" stroke="#444" />
    <rect x="554" y="30" width="7" height="7" fill="#000" />
    <text x="584" y="39" fontSize="18" fill="#111">B</text>
    <path d="M326.500 250.500v16l3.500-3.500 3 6.500 2.500-1-3-6.500h5z" fill="#fff" stroke="#666" />
  </Plot>
);

/* ---------- status bar and task bar ---------- */

const StatusBar = styled.footer`
  display: flex;
  align-items: center;
  gap: 5px;
  height: 16px;
  padding: 1px 0 0 1px;
  background: #f0f0f0;
  font-family: Roboto, 'Open Sans', sans-serif;
  span:first-child { flex: 1; }
`;

const TaskBar = styled.footer`
  display: flex;
  height: 35px;
  background: #080808;
  color: #f2f2f2;
`;

const TaskButton = styled.button<{ $active?: boolean }>`
  display: flex;
  align-items: center;
  justify-content: center;
  width: 42px;
  ${(p) => p.$active && css`background: #414141; border-bottom: 2px solid #76b4dc; padding-top: 2px;`}
`;

const Search = styled.label`
  display: flex;
  align-items: center;
  gap: 8px;
  width: 299px;
  padding: 0 13px 0 8px;
  background: #f0f0f0;
  input {
    flex: 1;
    min-width: 0;
    border: 0;
    padding: 0;
    background: transparent;
    font: 12px 'Open Sans', sans-serif;
    &::placeholder { color: #4d4d4d; opacity: 1; }
  }
`;

const Tray = styled.div`
  display: flex;
  align-items: center;
  gap: 8px;
  margin-left: auto;
  font-size: 11px;
`;

const People = styled.svg`
  margin-right: 12px;
`;

const Clock = styled.time`
  display: flex;
  flex-direction: column;
  align-items: center;
  width: 64px;
  line-height: 15px;
`;

const ShowDesktop = styled.button`
  align-self: stretch;
  width: 4px;
  margin-left: 10px;
  border-left: 1px solid #555;
`;

const Task = () => (
  <TaskBar>
    <TaskButton aria-label="Start">
      <svg width="14" height="14" viewBox="0 0 14 14" aria-hidden="true"><path d="M0 2l6-.8v5.300h-6z M7 1l7-1v6.500h-7z M0 7.500h6v5.300l-6-.8z M7 7.500h7v6.500l-7-1z" fill="#fff" /></svg>
    </TaskButton>
    <Search>
      <svg width="22" height="22" viewBox="0 0 22 22" aria-hidden="true"><circle cx="11" cy="11" r="9" fill="#fff" stroke="#111" strokeWidth="2.800" /></svg>
      <input placeholder="Type here to search" aria-label="Type here to search" />
      <svg width="11" height="16" viewBox="0 0 11 16" aria-hidden="true"><rect x="3.500" y=".5" width="4" height="9" rx="2" fill="#ddd" stroke="#444" /><path d="M1.500 7v2.500c0 4 8 4 8 0v-2.500 M5.500 12.500v3 M3 15.500h5" stroke="#444" fill="none" /></svg>
    </Search>
    <TaskButton aria-label="Task view">
      <svg width="18" height="16" viewBox="0 0 18 16" aria-hidden="true"><path d="M1 .5v2.500h10v-2.500 M1 15.500v-2.500h10v2.500 M1.500 5.500h9v5h-9z M15.500 0v16" stroke="#eee" fill="none" /><path d="M14 5h3v3h-3z" fill="#fff" /></svg>
    </TaskButton>
    <TaskButton aria-label="Edge">
      <svg width="22" height="22" viewBox="0 0 22 22" aria-hidden="true"><defs><linearGradient id="eg" x1="0" x2="1" y1="0" y2="0"><stop offset="0" stopColor="#1c9ad6" /><stop offset=".5" stopColor="#2bbdc4" /><stop offset="1" stopColor="#6fd44f" /></linearGradient></defs><circle cx="11" cy="11" r="10.500" fill="#1478c8" /><path d="M.7 10c1-12 20-12 20.800 0 0 4-4 5-7.500 4.500-2-.5-.5-2-1-4-1.500-4-9-3-12.300-.5z" fill="url(#eg)" /><path d="M8 12c0 6 6 8 12 4-3 7-14 6-15-2 0-3 2-5 4-4.500-.6.700-1 1.500-1 2.500z" fill="#0b4f9e" /><path d="M13 11c.5 2-1 3 1 3.500 3.500.5 6 0 7.500-2v3l-2 1.500c-7 2-11 0-10-4 .3-1.500 1.800-3 3.500-2z" fill="#080808" /></svg>
    </TaskButton>
    <TaskButton aria-label="File Explorer">
      <svg width="20" height="18" viewBox="0 0 20 18" aria-hidden="true"><path d="M1 1h7l1 2h9v13h-17z" fill="#f5c84b" /><path d="M1 4h17v12h-17z" fill="#fde28a" /><path d="M4 17v-8h12v8h-3v-4h-6v4z" fill="#3a9fd6" /></svg>
    </TaskButton>
    <TaskButton aria-label="Mail">
      <svg width="22" height="20" viewBox="0 0 22 20" aria-hidden="true"><path d="M1 7l10-7 10 7z" fill="#155fa5" /><path d="M1 6.500h20v7h-20z" fill="#fff" /><path d="M0 6.500l11 8 11-8v12.500h-22z" fill="#1b96e3" /><path d="M0 19l9-6 2 1.500 11-8v12.500z" fill="#37b0f2" /></svg>
    </TaskButton>
    <TaskButton aria-label="PowerPoint">
      <svg width="20" height="18" viewBox="0 0 20 18" aria-hidden="true"><path d="M9 2h10v14h-10z" fill="#f6e9e4" stroke="#c8472c" /><path d="M12 6h5 M12 9h5 M12 12h5" stroke="#c8472c" strokeWidth="1.500" /><path d="M0 2l11-2v18l-11-2z" fill="#cf4526" /><text x="2" y="13" fontSize="11" fontWeight="700" fill="#fff">P</text></svg>
    </TaskButton>
    <TaskButton aria-label="Firefox">
      <svg width="21" height="21" viewBox="0 0 21 21" aria-hidden="true"><path d="M1 12c0-4 1-6 3-9l1 3 3-2c0-2 2-3 3-4 1 3 3 3 4 5l1-3c3 2 4 6 4 9a9.500 9 0 0 1-19 1z" fill="#ff7a1c" /><path d="M10 0c1 3 4 4 5 7s2 6-1 8c4-1 6-4 5-8 1 9-5 12-9 12 8-4 0-13 0-19z" fill="#ffd23a" /><circle cx="10" cy="12" r="4.500" fill="#7b3fd0" /><path d="M4 8c3-1 5 1 8 2-3 0-4 3-6 3s-3-3-2-5z" fill="#ff4b3a" /></svg>
    </TaskButton>
    <TaskButton aria-label="Word">
      <svg width="20" height="18" viewBox="0 0 20 18" aria-hidden="true"><path d="M9 2h10v14h-10z" fill="#fff" stroke="#2b579a" /><path d="M12 5h5 M12 7.500h5 M12 10h5 M12 12.500h5" stroke="#2b579a" /><path d="M0 2l11-2v18l-11-2z" fill="#2b579a" /><text x="1" y="12" fontSize="9" fontWeight="700" fill="#fff">W</text></svg>
    </TaskButton>
    <TaskButton $active aria-label="OriginPro">
      <svg width="22" height="21" viewBox="0 0 22 21" aria-hidden="true"><path d="M7 1h13v13h-13z" fill="#e9eef5" stroke="#b7c1d0" /><circle cx="9" cy="12" r="8" fill="#f0a08c" /><path d="M3 15l3-5 3 3 3-6 3 2 M4 8l5-2 M8 18l6-5" stroke="#d0604c" fill="none" strokeWidth="1.300" /><path d="M5 7l3 2 M10 14l4 1" stroke="#fff" /></svg>
    </TaskButton>
    <Tray>
      <People width="14" height="14" viewBox="0 0 14 14" aria-hidden="true"><circle cx="4.500" cy="6" r="2.300" stroke="#eee" fill="none" strokeWidth="1.200" /><path d="M1 13.500c0-7 7-7 7 0 M7 7c2-3 6-2 6 2" stroke="#eee" fill="none" strokeWidth="1.200" /><circle cx="9.500" cy="3" r="2.300" stroke="#eee" fill="none" strokeWidth="1.200" /></People>
      <svg width="12" height="8" viewBox="0 0 12 8" aria-hidden="true"><path d="M1 7l5-5 5 5" stroke="#eee" fill="none" strokeWidth="1.200" /></svg>
      <svg width="14" height="9" viewBox="0 0 14 9" aria-hidden="true"><path d="M.5 .5h11v7h-11z M12.500 2.500v3" stroke="#eee" fill="none" /><path d="M2 2h5v4h-5z" fill="#fff" /></svg>
      <svg width="12" height="11" viewBox="0 0 12 11" aria-hidden="true"><path d="M1.500 11c0-5 4-9 9-9.500 M4.500 11c0-3 3-6 6-6.500 M7.500 11c0-2 1.500-3 3-3.500" stroke="#8c8c8c" fill="none" strokeWidth="1.200" /><circle cx="10.500" cy="10" r="1.200" fill="#fff" /></svg>
      <svg width="13" height="10" viewBox="0 0 13 10" aria-hidden="true"><path d="M.5 3.500h2l2.500-2.500v8l-2.500-2.500h-2z M8 3l4 4 M12 3l-4 4" stroke="#eee" fill="none" /></svg>
      <span>ENG</span>
      <Clock><span>21:19</span><span>03-06-2020</span></Clock>
      <svg width="14" height="14" viewBox="0 0 14 14" aria-hidden="true"><path d="M.5 .5h13v10h-4l-1.500 2.500-1.500-2.500h-6z" stroke="#eee" fill="none" /></svg>
      <ShowDesktop aria-label="Show desktop" />
    </Tray>
  </TaskBar>
);

export default function App() {
  return (
    <Window>
      <Global />
      <AppFrame>
        <TitleBar>
          <svg width="14" height="15" viewBox="0 0 14 15" aria-hidden="true"><path d="M4 1h9v9h-9z" fill="#eef1f6" stroke="#a2a9b5" /><circle cx="6.500" cy="8" r="6" fill="#d8573c" /><path d="M2 10l2-4 3 3 2-5 2 2 M4 12l5-3" stroke="#f0b0a0" fill="none" strokeWidth="1.200" /></svg>
          <Title>OriginPro 9 64-bit - C:\Users\USER\Documents\OriginLab\90\User Files\UNTITLED * - /Folder1/ - [Graph1]</Title>
          <WindowButtons $gap={32}>
            <button aria-label="Minimize"><svg width="9" height="9" viewBox="0 0 9 9"><path d="M0 4.500h9" stroke="#888" /></svg></button>
            <button aria-label="Restore"><svg width="9" height="9" viewBox="0 0 9 9"><path d="M.5 2.500h6v6h-6z M2.500 2.500v-2h6v6h-2" stroke="#999" fill="none" /></svg></button>
            <button aria-label="Close"><svg width="9" height="9" viewBox="0 0 9 9"><path d="M.5 .5l8 8 M8.500 .5l-8 8" stroke="#888" /></svg></button>
          </WindowButtons>
        </TitleBar>
        <MenuBar>
          <svg width="13" height="14" viewBox="0 0 13 14" aria-hidden="true"><path d="M.5 .5h12v13h-12z" fill="#1d3350" stroke="#223" /><path d="M3 2h8v7h-8z" fill="#39a4c6" /><path d="M3 7l3-3 2 2 3-3 M2 11h9 M4 2v7" stroke="#bfeaf4" fill="none" /></svg>
          <Menus>
            {['File', 'Edit', 'View', 'Graph', 'Data', 'Analysis', 'Gadgets', 'Tools', 'Format', 'Window', 'Help'].map((m) => (
              <MenuButton key={m}>{m}</MenuButton>
            ))}
          </Menus>
          <WindowButtons $gap={8}>
            <button aria-label="Minimize graph"><svg width="6" height="6" viewBox="0 0 6 6"><path d="M1 5h4" stroke="#222" strokeWidth="1.500" /></svg></button>
            <button aria-label="Restore graph"><svg width="6" height="6" viewBox="0 0 6 6"><path d="M.5 2.500h3.500v3h-3.500z M2 2v-1.500h3.500v3h-1.500" stroke="#222" fill="none" /></svg></button>
            <button aria-label="Close graph"><svg width="6" height="6" viewBox="0 0 6 6"><path d="M1 1l4 4 M5 1l-4 4" stroke="#222" strokeWidth="1.200" /></svg></button>
          </WindowButtons>
        </MenuBar>
        <TopToolbars />
        <Body>
          <AutoHide>
            <SideTab $h={72} $pad={2}>Quick Help</SideTab>
            <SideTab $h={100} $pad={10}>Messages Log</SideTab>
          </AutoHide>
          <ExplorerPanel />
          <ToolColumn $w={25} $pad={3}>
            <SideTools
              list="pointer zoomIn zoomOut reader dataReader selector mask region drawPoints T arrow line rect hand insertGraph insertEq rescale shape3d"
              active="pointer"
              corners="dataReader mask region arrow line rect insertGraph insertEq"
            />
          </ToolColumn>
          <Center>
            <Canvas>
              <Page>
                <LayerButton>1</LayerButton>
                <Graph />
              </Page>
            </Canvas>
            <BottomToolbars />
          </Center>
          <ToolColumn $w={18} $pad={1}>
            <SideTools list="rcRescale | legend1 grid4 grid4 | axisL axisT axisR axisB inset inset | hatch legend2 scaleBar clock table" />
            <SideTools list="alL alR | alT alB | alH alV | sameW sameH | front back | fontUp fontUp | group group" />
          </ToolColumn>
        </Body>
        <StatusBar>
          <span>For Help, press F1</span>
          <span>--</span>
          <span>AU : ON</span>
          <span>Dark Colors &amp; Light Grids</span>
          <span>1:[Book1]Sheet1!Col(B)[1:10]</span>
          <span>1:[Graph1]1!1</span>
          <span>Radian</span>
        </StatusBar>
      </AppFrame>
      <Task />
    </Window>
  );
}
